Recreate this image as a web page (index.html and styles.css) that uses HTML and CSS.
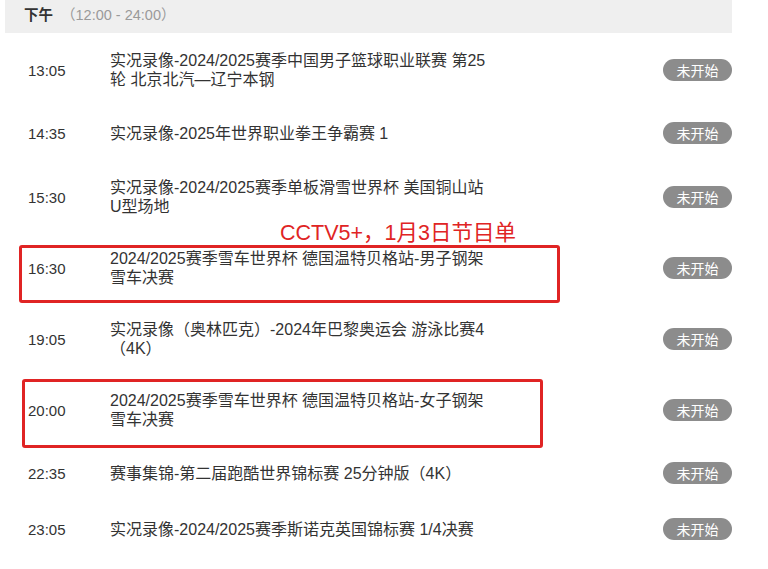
FILE: index.html
```html
<!DOCTYPE html>
<html lang="zh-CN">
<head>
<meta charset="utf-8">
<link rel="stylesheet" href="styles.css">
</head>
<body>
<div class="page">
  <div class="period">
    <span class="period-name">下午</span>
    <span class="period-range">（12:00 - 24:00）</span>
  </div>
  <div class="list">
    <div class="row gap-first">
      <div class="time">13:05</div>
      <div class="title">实况录像-2024/2025赛季中国男子篮球职业联赛 第25<br>轮 北京北汽—辽宁本钢</div>
      <div class="status">未开始</div>
    </div>
    <div class="row gap-m">
      <div class="time">14:35</div>
      <div class="title">实况录像-2025年世界职业拳王争霸赛 1</div>
      <div class="status">未开始</div>
    </div>
    <div class="row gap-m2">
      <div class="time">15:30</div>
      <div class="title">实况录像-2024/2025赛季单板滑雪世界杯 美国铜山站<br>U型场地</div>
      <div class="status">未开始</div>
    </div>
    <div class="row gap-l">
      <div class="time">16:30</div>
      <div class="title">2024/2025赛季雪车世界杯 德国温特贝格站-男子钢架<br>雪车决赛</div>
      <div class="status">未开始</div>
    </div>
    <div class="row gap-l">
      <div class="time">19:05</div>
      <div class="title">实况录像（奥林匹克）-2024年巴黎奥运会 游泳比赛4<br>（4K）</div>
      <div class="status">未开始</div>
    </div>
    <div class="row gap-l">
      <div class="time">20:00</div>
      <div class="title">2024/2025赛季雪车世界杯 德国温特贝格站-女子钢架<br>雪车决赛</div>
      <div class="status">未开始</div>
    </div>
    <div class="row gap-m">
      <div class="time">22:35</div>
      <div class="title">赛事集锦-第二届跑酷世界锦标赛 25分钟版（4K）</div>
      <div class="status">未开始</div>
    </div>
    <div class="row gap-s">
      <div class="time">23:05</div>
      <div class="title">实况录像-2024/2025赛季斯诺克英国锦标赛 1/4决赛</div>
      <div class="status">未开始</div>
    </div>
  </div>
  <div class="note">CCTV5+，1月3日节目单</div>
  <div class="mark mark-1"></div>
  <div class="mark mark-2"></div>
</div>
</body>
</html>
```

FILE: styles.css
```css
html, body {
  margin: 0;
  padding: 0;
  background: #ffffff;
}
body {
  font-family: "Liberation Sans", "Noto Sans CJK SC", sans-serif;
  color: #333333;
}
.page {
  position: relative;
  width: 727px;
  margin-left: 5px;
  height: 569px;
}
.period {
  height: 33px;
  background: #efefef;
  display: flex;
  align-items: center;
  padding-left: 19px;
  padding-bottom: 6px;
  box-sizing: border-box;
}
.period-name {
  font-family: "Noto Sans CJK SC", sans-serif;
  font-weight: 700;
  font-size: 14.5px;
  color: #333;
}
.period-range {
  font-family: "Liberation Sans", "Noto Sans CJK SC", sans-serif;
  font-size: 14.5px;
  color: #9a9a9a;
  margin-left: 8px;
}
.list {
  display: flex;
  flex-direction: column;
}
.row {
  height: 40px;
  display: flex;
  align-items: center;
  padding-left: 23px;
}
.gap-first { margin-top: 17px; }
.gap-s { margin-top: 16px; }
.gap-m { margin-top: 23px; }
.gap-m2 { margin-top: 24px; }
.gap-l { margin-top: 31px; }
.time {
  width: 82px;
  flex: none;
  font-size: 15px;
  color: #333;
}
.title {
  flex: 1;
  font-size: 16px;
  line-height: 19px;
  color: #333;
  white-space: nowrap;
}
.status {
  flex: none;
  width: 69px;
  height: 22px;
  border-radius: 11px;
  background: #8c8c8c;
  color: #ffffff;
  font-family: "Noto Sans CJK SC", sans-serif;
  font-size: 14px;
  line-height: 22px;
  text-align: center;
}
.note {
  position: absolute;
  left: 275px;
  top: 220px;
  font-family: "Liberation Sans", "Noto Sans CJK SC", sans-serif;
  font-size: 21.5px;
  line-height: 26px;
  color: #e02424;
}
.mark {
  position: absolute;
  border: 3px solid #e02424;
  border-radius: 3px;
  box-sizing: border-box;
}
.mark-1 {
  left: 14px;
  top: 245px;
  width: 541px;
  height: 58px;
}
.mark-2 {
  left: 17px;
  top: 379px;
  width: 521px;
  height: 69px;
}
```
